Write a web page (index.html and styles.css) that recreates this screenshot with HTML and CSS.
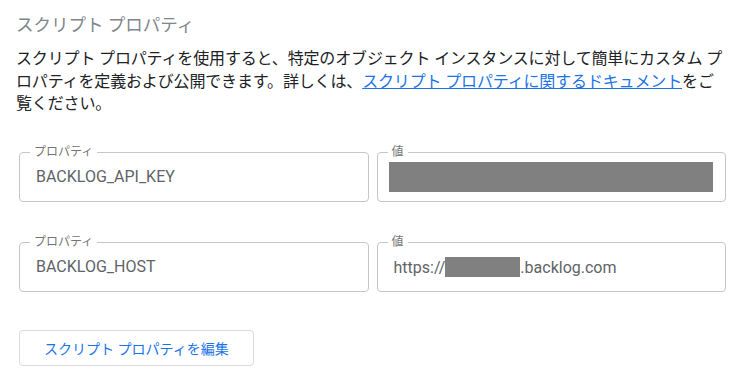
FILE: index.html
```html
<!DOCTYPE html>
<html>
	<head>
		<meta charset="utf-8">
		<title>スクリプト プロパティ</title>
		<link rel="stylesheet" href="styles.css">
	</head>
	<body>
		<div class="page">
			<h2 class="title">スクリプト プロパティ</h2>
			<p class="desc">スクリプト プロパティを使用すると、特定のオブジェクト インスタンスに対して簡単にカスタム プロパティを定義および公開できます。詳しくは、<a href="#" class="doc_link">スクリプト プロパティに関するドキュメント</a>をご覧ください。</p>

			<div class="fields">
				<div class="field">
					<span class="field_label">プロパティ</span>
					<span class="field_value">BACKLOG_API_KEY</span>
				</div>
				<div class="field">
					<span class="field_label">値</span>
					<span class="redact redact_key"></span>
				</div>
				<div class="field">
					<span class="field_label">プロパティ</span>
					<span class="field_value">BACKLOG_HOST</span>
				</div>
				<div class="field">
					<span class="field_label">値</span>
					<span class="field_value">https://<span class="redact redact_host"></span>.backlog.com</span>
				</div>
			</div>

			<button class="edit_btn">スクリプト プロパティを編集</button>
		</div>
	</body>
</html>
```

FILE: styles.css
```css
body {
	margin: 0;
	background: #fff;
	font-family: Roboto, "Noto Sans CJK JP", sans-serif;
}
.page {
	padding: 13px 16px 0;
}
.title {
	margin: 0;
	font-size: 17.5px;
	line-height: 24px;
	font-weight: normal;
	color: #80868b;
}
.desc {
	margin: 11px 11px 0 0;
	font-size: 16px;
	line-height: 22.5px;
	letter-spacing: -0.15px;
	color: #202124;
}
.doc_link {
	color: #1a73e8;
	text-decoration: underline;
}

.fields {
	display: grid;
	grid-template-columns: repeat(2, minmax(0, 1fr));
	column-gap: 8px;
	row-gap: 40px;
	margin: 36px 11px 0 3px;
}
.field {
	position: relative;
	box-sizing: border-box;
	height: 50px;
	border: 1px solid #c4c7c5;
	border-radius: 4px;
	padding: 0 16px;
	display: flex;
	align-items: center;
}
.field_label {
	position: absolute;
	top: -8px;
	left: 10px;
	padding: 0 4px;
	background: #fff;
	font-size: 12px;
	line-height: 14px;
	color: #757575;
}
.field_value {
	font-size: 16px;
	color: #5f6368;
	white-space: nowrap;
}
.redact {
	display: inline-block;
	background: #808080;
}
.redact_key {
	flex: none;
	width: 324px;
	height: 30px;
	margin-left: -5px;
}
.redact_host {
	width: 75px;
	height: 20px;
	vertical-align: -4px;
}

.edit_btn {
	margin: 38px 0 0 3px;
	height: 36px;
	padding: 0 24px;
	background: #fff;
	border: 1px solid #dadce0;
	border-radius: 4px;
	font-family: Roboto, "Noto Sans CJK JP", sans-serif;
	font-size: 14px;
	color: #1a73e8;
	cursor: pointer;
}
```
